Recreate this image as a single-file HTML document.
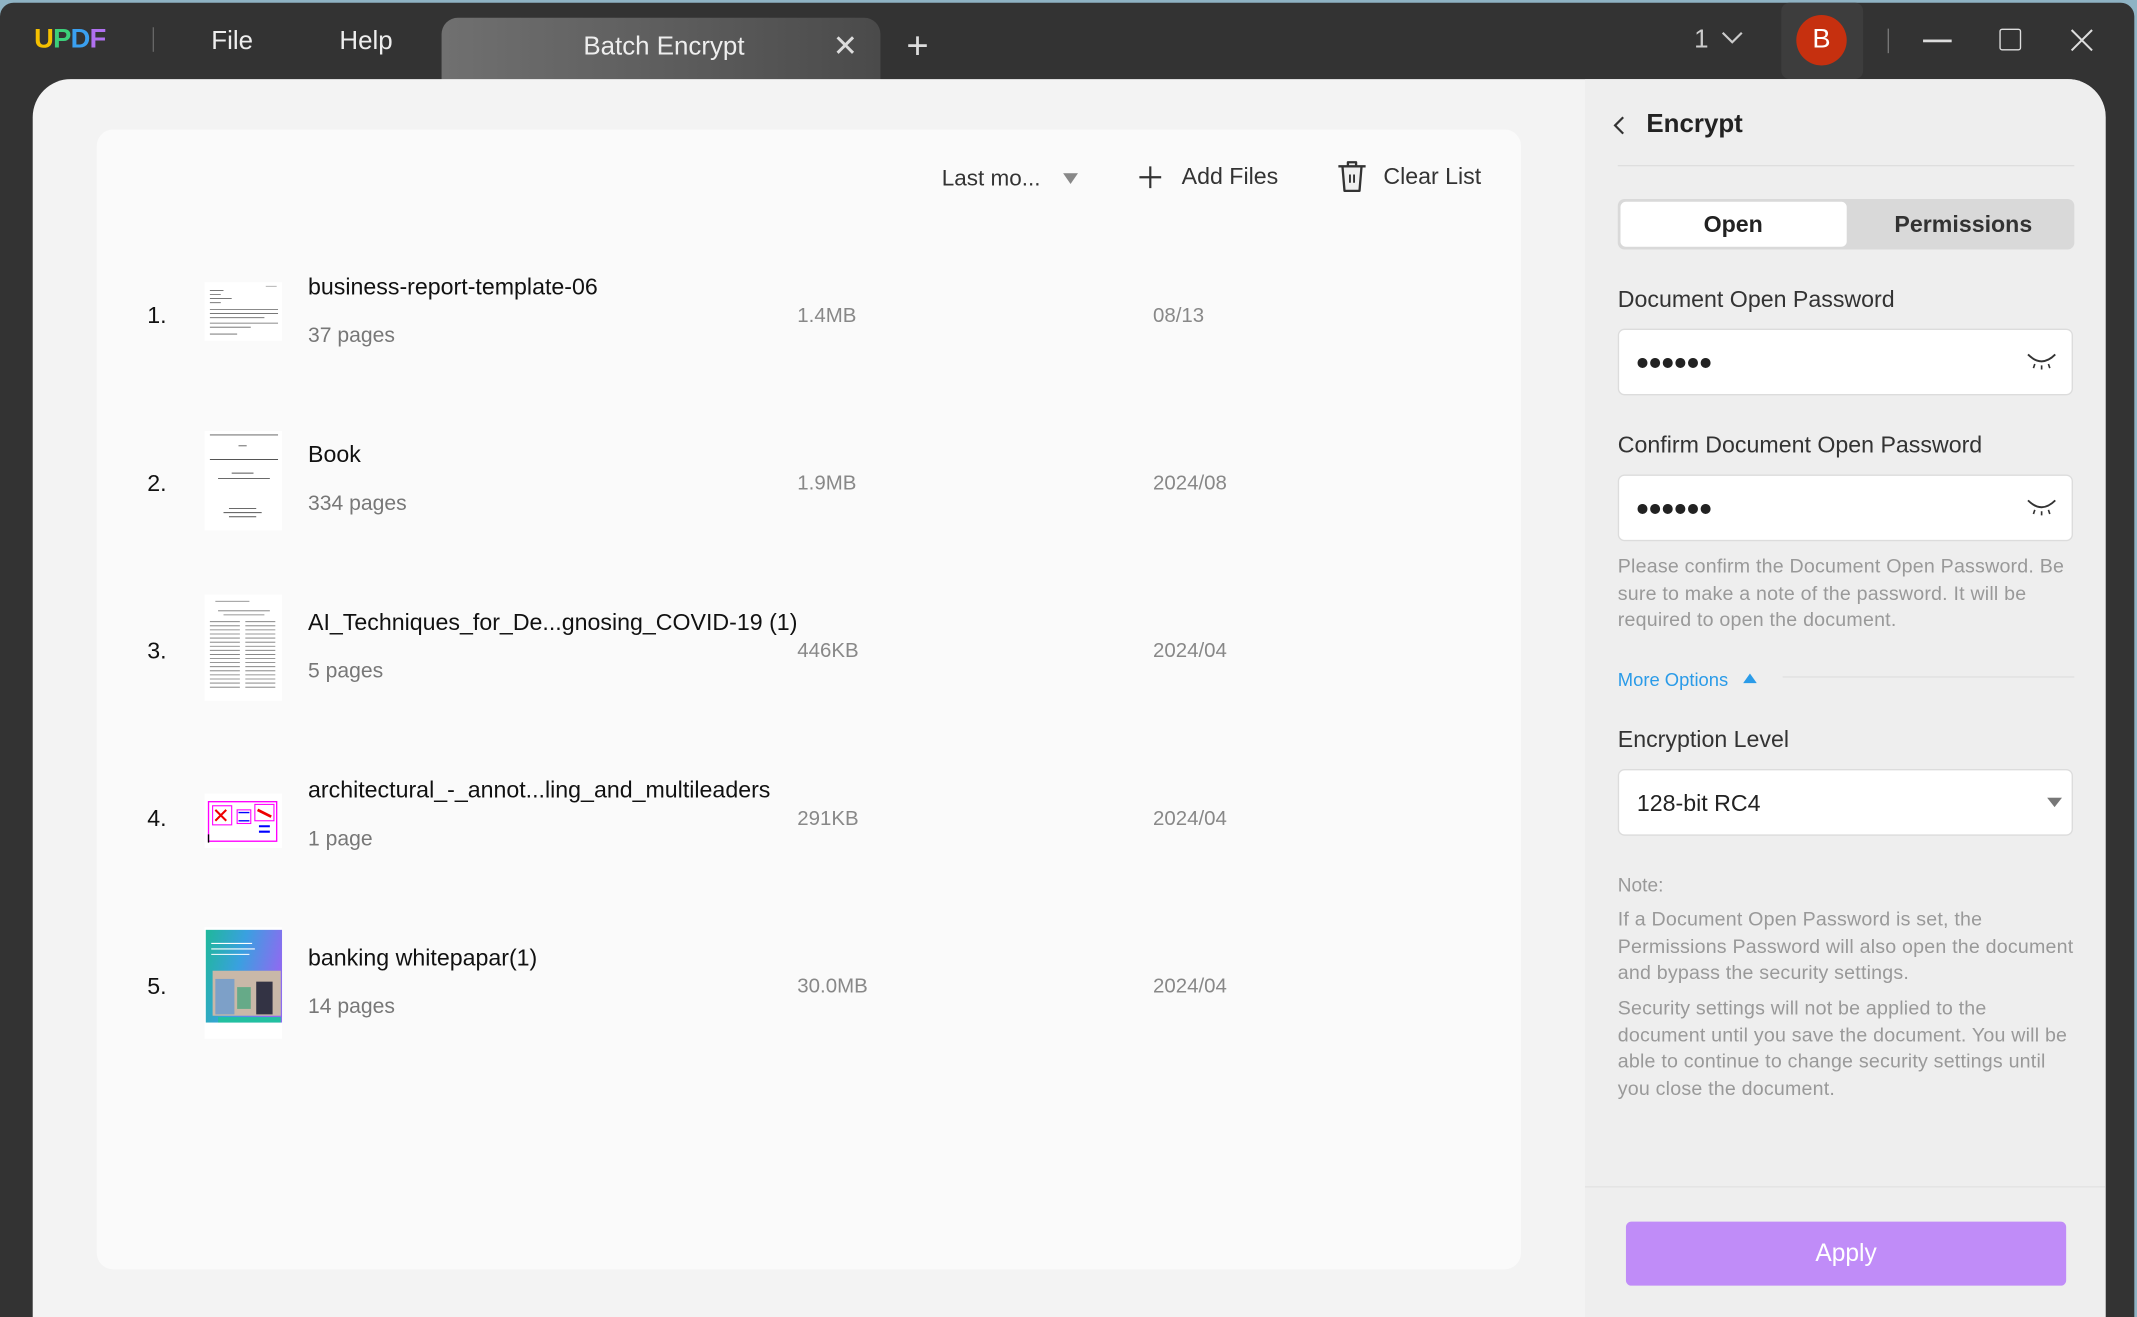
<!DOCTYPE html>
<html><head><meta charset="utf-8"><style>
html,body{margin:0;padding:0;width:2137px;height:1317px;overflow:hidden;background:#8fb3c4}
#s{position:absolute;left:0;top:0;width:1568px;height:966px;transform:scale(1.3629,1.3634);transform-origin:0 0;font-family:"Liberation Sans",sans-serif;}
.a{position:absolute;white-space:nowrap}
.win{position:absolute;left:0;top:2px;width:1566px;height:964px;background:#333;border-radius:10px 10px 0 0}
.t{color:#eee;font-size:19px}
.num{font-size:17px;color:#111}
.nm{font-size:17px;color:#111}
.pg{font-size:15.5px;color:#777}
.sz{font-size:15px;color:#888}
.th{position:absolute;left:150px;width:57px;background:#fff}
.lbl{font-size:17px;color:#333}
.inp{position:absolute;left:1187px;width:332px;height:47px;background:#fff;border:1px solid #dcdcdc;border-radius:5px}
.note{font-size:14.4px;color:#999;line-height:19.5px;white-space:normal;width:335px;letter-spacing:0.15px}
</style></head><body><div id="s">
<div class="win"></div>
<!-- title bar -->
<div class="a" style="left:25px;top:18px;font-size:20px;font-weight:bold;letter-spacing:-0.5px"><span style="color:#f5c000">U</span><span style="color:#3ccf7a">P</span><span style="color:#3aa0f0">D</span><span style="color:#b070f0">F</span></div>
<div class="a" style="left:112px;top:20px;width:1px;height:18px;background:#666"></div>
<div class="a t" style="left:155px;top:20px">File</div>
<div class="a t" style="left:249px;top:20px">Help</div>
<div class="a" style="left:324px;top:13px;width:322px;height:46px;border-radius:12px 12px 0 0;background:linear-gradient(90deg,#707070,#5a5a5a 60%,#4a4a4a)"></div>
<div class="a t" style="left:428px;top:24px">Batch Encrypt</div>
<div class="a" style="left:611px;top:21px;color:#ddd;font-size:22px">✕</div>
<div class="a" style="left:665px;top:18px;color:#ddd;font-size:28px;font-weight:200">+</div>
<div class="a t" style="left:1243px;top:19px;color:#ccc">1</div>
<svg class="a" style="left:1262px;top:22px" width="18" height="12"><path d="M2 2l7 7 7-7" stroke="#ccc" stroke-width="1.6" fill="none"/></svg>
<div class="a" style="left:1307px;top:2px;width:60px;height:56px;background:#3d3d3d;border-radius:6px"></div>
<div class="a" style="left:1318px;top:11px;width:37px;height:37px;border-radius:50%;background:#c6300f;color:#fff;font-size:20px;text-align:center;line-height:37px">B</div>
<div class="a" style="left:1385px;top:21px;width:1px;height:18px;background:#777"></div>
<div class="a" style="left:1411px;top:29px;width:21px;height:1.5px;background:#ddd"></div>
<div class="a" style="left:1467px;top:21px;width:14px;height:14px;border:1.5px solid #ddd;border-radius:2px"></div>
<svg class="a" style="left:1519px;top:21px" width="17" height="17"><path d="M1 1l15 15M16 1L1 16" stroke="#ddd" stroke-width="1.5"/></svg>
<!-- content -->
<div class="a" style="left:24px;top:58px;width:1521px;height:908px;background:#f3f3f3;border-radius:28px 28px 0 0;overflow:hidden">
  <div class="a" style="left:1139px;top:0;width:382px;height:908px;background:#eeeeee"></div>
  <div class="a" style="left:1139px;top:812px;width:382px;height:1px;background:#e2e2e2"></div>
</div>
<div class="a" style="left:71px;top:95px;width:1045px;height:836px;background:#fafafa;border-radius:12px"></div>
<!-- toolbar -->
<div class="a" style="left:691px;top:122px;font-size:16.5px;color:#333">Last mo...</div>
<svg class="a" style="left:780px;top:127px" width="11" height="9"><path d="M0 0h11L5.5 8z" fill="#888"/></svg>
<svg class="a" style="left:835px;top:121px" width="18" height="18"><path d="M9 1v16M1 9h16" stroke="#333" stroke-width="1.6"/></svg>
<div class="a" style="left:867px;top:120px;font-size:17px;color:#333">Add Files</div>
<svg class="a" style="left:981px;top:117px" width="22" height="25"><path d="M1 5h20M8 5V2h6v3M4 5l1.5 18h11L18 5" stroke="#333" stroke-width="1.7" fill="#f0f0f0" stroke-linejoin="round"/><path d="M9.5 11v6M12.5 11v6" stroke="#333" stroke-width="1.4"/></svg>
<div class="a" style="left:1015px;top:120px;font-size:17px;color:#333">Clear List</div>
<!-- rows -->
<div class="a num" style="left:108px;top:222px">1.</div>
<div class="th" style="top:207px;height:43px"><svg width="57" height="43"><g stroke="#666" stroke-width=".6"><path d="M4 6h10M4 9h8M4 12h16M4 15h8M4 20h50M4 23h50M4 26h40M4 30h50M4 33h30M4 38h20"/><path d="M45 3h8" stroke="#aaa"/></g></svg></div>
<div class="a nm" style="left:226px;top:201px">business-report-template-06</div>
<div class="a pg" style="left:226px;top:238px">37 pages</div>
<div class="a sz" style="left:585px;top:223px">1.4MB</div>
<div class="a sz" style="left:846px;top:223px">08/13</div>

<div class="a num" style="left:108px;top:345px">2.</div>
<div class="th" style="top:316px;height:73px"><svg width="57" height="73"><g stroke="#555" stroke-width=".7"><path d="M4 3h50M25 11h6M4 21h50M20 31h16M10 35h38M18 57h20M14 60h28M18 63h20"/></g></svg></div>
<div class="a nm" style="left:226px;top:324px">Book</div>
<div class="a pg" style="left:226px;top:361px">334 pages</div>
<div class="a sz" style="left:585px;top:346px">1.9MB</div>
<div class="a sz" style="left:846px;top:346px">2024/08</div>

<div class="a num" style="left:108px;top:468px">3.</div>
<div class="th" style="top:436px;height:78px"><svg width="57" height="78"><g stroke="#777" stroke-width=".6"><path d="M8 5h25M10 12h38M14 15h30"/><path d="M4 20h22M4 23h22M4 26h22M4 29h22M4 32h22M4 35h22M4 38h22M4 41h22M4 44h22M4 47h22M4 50h22M4 53h22M4 56h22M4 59h22M4 62h22M4 65h22M4 68h22M30 20h22M30 23h22M30 26h22M30 29h22M30 32h22M30 35h22M30 38h22M30 41h22M30 44h22M30 47h22M30 50h22M30 53h22M30 56h22M30 59h22M30 62h22M30 65h22M30 68h22"/></g></svg></div>
<div class="a nm" style="left:226px;top:447px">AI_Techniques_for_De...gnosing_COVID-19 (1)</div>
<div class="a pg" style="left:226px;top:484px">5 pages</div>
<div class="a sz" style="left:585px;top:469px">446KB</div>
<div class="a sz" style="left:846px;top:469px">2024/04</div>

<div class="a num" style="left:108px;top:591px">4.</div>
<div class="th" style="top:582px;height:40px"><svg width="57" height="40"><rect x="3" y="6" width="50" height="29" fill="none" stroke="#f0f" stroke-width="1"/><rect x="6" y="9" width="14" height="14" fill="none" stroke="#f0f" stroke-width=".8"/><path d="M8 12l8 8M16 12l-8 8" stroke="#e00" stroke-width="1.5"/><rect x="24" y="12" width="10" height="10" fill="none" stroke="#f0f" stroke-width=".8"/><path d="M25 14h8M25 20h8" stroke="#00f"/><rect x="37" y="8" width="14" height="12" fill="none" stroke="#f0f" stroke-width=".8"/><path d="M39 12l10 5" stroke="#e00" stroke-width="2"/><path d="M40 24h8M40 28h8" stroke="#00f" stroke-width="1.5"/><path d="M3 30v6" stroke="#000"/></svg></div>
<div class="a nm" style="left:226px;top:570px">architectural_-_annot...ling_and_multileaders</div>
<div class="a pg" style="left:226px;top:607px">1 page</div>
<div class="a sz" style="left:585px;top:592px">291KB</div>
<div class="a sz" style="left:846px;top:592px">2024/04</div>

<div class="a num" style="left:108px;top:714px">5.</div>
<div class="th" style="top:680px;height:82px;background:#fff"><svg width="57" height="82"><defs><linearGradient id="g" x1="0" y1="0" x2="1" y2="0.3"><stop offset="0" stop-color="#1fb89a"/><stop offset=".5" stop-color="#3aa0e0"/><stop offset="1" stop-color="#8c6cf0"/></linearGradient></defs><rect x="1" y="2" width="56" height="68" fill="url(#g)"/><rect x="10" y="66" width="46" height="4" fill="#22c0a0"/><g stroke="#fff" stroke-width=".8"><path d="M5 12h30M5 16h32M5 20h28"/></g><rect x="6" y="32" width="50" height="33" fill="#c9b8a8"/><rect x="8" y="38" width="14" height="26" fill="#7da0c8"/><rect x="38" y="40" width="12" height="24" fill="#334"/><rect x="24" y="44" width="10" height="16" fill="#6a8"/></svg></div>
<div class="a nm" style="left:226px;top:693px">banking whitepapar(1)</div>
<div class="a pg" style="left:226px;top:730px">14 pages</div>
<div class="a sz" style="left:585px;top:715px">30.0MB</div>
<div class="a sz" style="left:846px;top:715px">2024/04</div>

<!-- right panel -->
<svg class="a" style="left:1183px;top:84px" width="10" height="16"><path d="M8 2L2 8l6 6" stroke="#333" stroke-width="1.6" fill="none"/></svg>
<div class="a" style="left:1208px;top:81px;font-size:19px;font-weight:bold;color:#222">Encrypt</div>
<div class="a" style="left:1187px;top:121px;width:335px;height:1px;background:#dedede"></div>
<div class="a" style="left:1187px;top:146px;width:335px;height:37px;background:#d9d9d9;border-radius:5px"></div>
<div class="a" style="left:1189px;top:148px;width:166px;height:33px;background:#fff;border-radius:4px"></div>
<div class="a" style="left:1250px;top:155px;font-size:17px;font-weight:bold;color:#222">Open</div>
<div class="a" style="left:1390px;top:155px;font-size:17px;font-weight:bold;color:#333">Permissions</div>
<div class="a lbl" style="left:1187px;top:210px">Document Open Password</div>
<div class="inp" style="top:241px"></div>
<div class="a" style="left:1200px;top:256px;font-size:17px;color:#222;letter-spacing:-1px">●●●●●●</div>
<svg class="a" style="left:1487px;top:258px" width="22" height="14"><path d="M1 2q10 10 20 0" stroke="#333" stroke-width="1.4" fill="none"/><path d="M6 9l-1 3M11 10v3M16 9l1 3" stroke="#333" stroke-width="1.2"/></svg>
<div class="a lbl" style="left:1187px;top:317px">Confirm Document Open Password</div>
<div class="inp" style="top:348px"></div>
<div class="a" style="left:1200px;top:363px;font-size:17px;color:#222;letter-spacing:-1px">●●●●●●</div>
<svg class="a" style="left:1487px;top:365px" width="22" height="14"><path d="M1 2q10 10 20 0" stroke="#333" stroke-width="1.4" fill="none"/><path d="M6 9l-1 3M11 10v3M16 9l1 3" stroke="#333" stroke-width="1.2"/></svg>
<div class="a note" style="left:1187px;top:407px">Please confirm the Document Open Password. Be sure to make a note of the password. It will be required to open the document.</div>
<div class="a" style="left:1187px;top:491px;font-size:13.5px;color:#2a9be8">More Options</div>
<svg class="a" style="left:1279px;top:494px" width="10" height="8"><path d="M0 7h10L5 0z" fill="#2a9be8"/></svg>
<div class="a" style="left:1308px;top:496px;width:214px;height:1px;background:#e0e0e0"></div>
<div class="a lbl" style="left:1187px;top:533px">Encryption Level</div>
<div class="inp" style="top:564px"></div>
<div class="a" style="left:1201px;top:580px;font-size:17px;color:#222">128-bit RC4</div>
<svg class="a" style="left:1502px;top:585px" width="11" height="8"><path d="M0 0h11L5.5 7z" fill="#777"/></svg>
<div class="a" style="left:1187px;top:641px;font-size:14px;color:#999">Note:</div>
<div class="a note" style="left:1187px;top:666px">If a Document Open Password is set, the Permissions Password will also open the document and bypass the security settings.</div>
<div class="a note" style="left:1187px;top:731px">Security settings will not be applied to the document until you save the document. You will be able to continue to change security settings until you close the document.</div>
<div class="a" style="left:1193px;top:896px;width:323px;height:47px;background:#c08cf8;border-radius:4px;color:#fff;font-size:18px;text-align:center;line-height:47px">Apply</div>
</div></body></html>
